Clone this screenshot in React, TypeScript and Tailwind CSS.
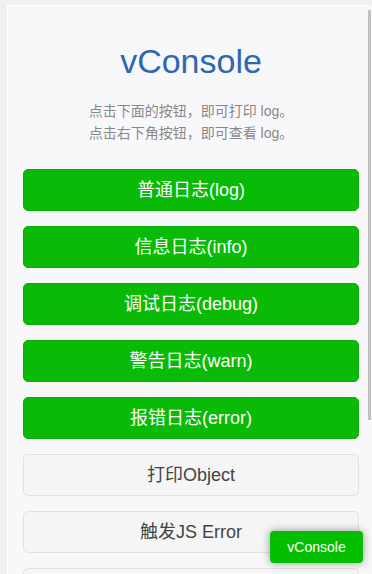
const greenButtons = ['普通日志(log)', '信息日志(info)', '调试日志(debug)', '警告日志(warn)', '报错日志(error)'];
const plainButtons = ['打印Object', '触发JS Error', '清空日志'];

export default function App() {
	return (
		<div
			className="relative h-[574px] w-[372px] overflow-hidden bg-[#f0f0f2] pl-[7px] pt-[5px]"
			style={{ fontFamily: '"Liberation Sans", Arial, "Noto Sans CJK SC", sans-serif' }}
		>
			<div className="flex h-full">
				<div className="flex-1 border-l border-t border-[#ffffff] bg-[#f8f8fa] pl-[15px] pr-[9px]">
					<h1 className="mt-[35px] text-center text-[34px] leading-[40px] text-[#2a68b3]">vConsole</h1>
					<div className="mt-[19px] text-center text-[14px] leading-[22px] text-[#888888]">
						<p>点击下面的按钮，即可打印 log。</p>
						<p>点击右下角按钮，即可查看 log。</p>
					</div>
					<div className="mt-[25px] flex flex-col gap-[15px]">
						{greenButtons.map((label) => (
							<button
								key={label}
								className="h-[42px] w-full rounded-[5px] border border-[#08ad06] bg-[#09bb07] text-[18px] text-white"
							>
								{label}
							</button>
						))}
						{plainButtons.map((label) => (
							<button
								key={label}
								className="h-[42px] w-full rounded-[5px] border border-[#e2e2e2] bg-[#f5f5f5] text-[18px] text-[#444444]"
							>
								{label}
							</button>
						))}
					</div>
				</div>
				<div className="flex w-[4px] flex-col bg-[#f8f8fa] pt-[5px]">
					<div className="h-[410px] w-[3px] bg-[#c1c1c1]" />
				</div>
			</div>
			<button className="absolute bottom-[11px] right-[9px] h-[32px] w-[93px] rounded-[4px] bg-[#04be02] text-[14px] text-white shadow-[0_0_8px_rgba(0,0,0,0.4)]">
				vConsole
			</button>
		</div>
	);
}
